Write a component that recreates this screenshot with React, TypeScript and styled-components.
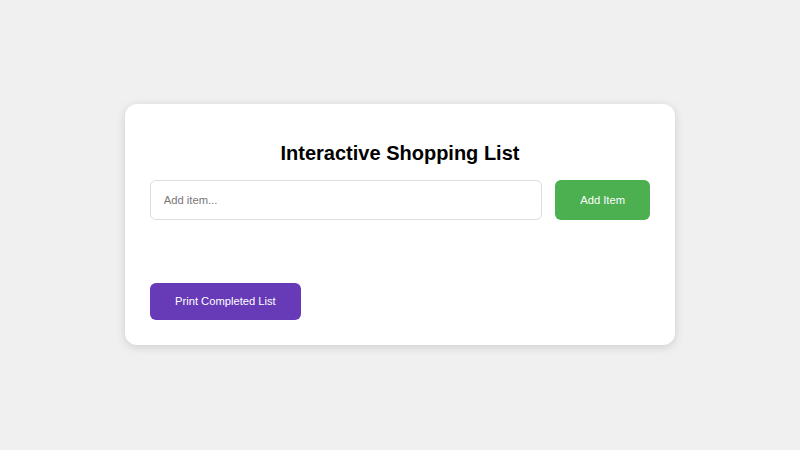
import React, { useState } from "react"
import styled, { createGlobalStyle } from "styled-components"

const GlobalStyle = createGlobalStyle`
  html, body {
    margin: 0;
    padding: 0;
    background-color: #f0f0f0;
    font-family: "Liberation Sans", Arial, sans-serif;
  }
`

const Page = styled.div`
  width: 800px;
  height: 448px;
  display: flex;
  align-items: center;
  justify-content: center;
`

const Card = styled.div`
  box-sizing: border-box;
  width: 550px;
  padding: 25px;
  background-color: #fff;
  border-radius: 12px;
  box-shadow: 0 2px 10px rgba(0, 0, 0, 0.15);
`

const Title = styled.h2`
  margin: 13px 0 15px;
  font-size: 20px;
  line-height: 23px;
  font-weight: 700;
  text-align: center;
  color: #000;
`

const InputRow = styled.div`
  display: flex;
  gap: 13px;
`

const ItemInput = styled.input`
  box-sizing: border-box;
  flex: 1;
  height: 40px;
  padding: 0 12.8px;
  border: 1.6px solid #ddd;
  border-radius: 6px;
  font-family: inherit;
  font-size: 11.2px;
  color: #333;
  outline: none;
  &::placeholder {
    color: #777;
  }
`

const Button = styled.button<{ $color: string; $height: number }>`
  box-sizing: border-box;
  height: ${p => p.$height}px;
  padding: 0 25px;
  border: none;
  border-radius: 6px;
  background-color: ${p => p.$color};
  color: #fff;
  font-family: inherit;
  font-size: 11.2px;
  cursor: pointer;
`

const ItemList = styled.ul`
  list-style: none;
  margin: 16px 0;
  padding: 0;
  min-height: 31px;
`

const Item = styled.li`
  font-size: 11.2px;
  padding: 6px 0;
  color: #333;
`

export default function App() {
  const [text, setText] = useState("")
  const [items, setItems] = useState<string[]>([])

  const addItem = () => {
    if (!text.trim()) return
    setItems([...items, text.trim()])
    setText("")
  }

  return (
    <>
      <GlobalStyle />
      <Page>
        <Card>
          <Title>Interactive Shopping List</Title>
          <InputRow>
            <ItemInput
              placeholder="Add item..."
              value={text}
              onChange={e => setText(e.target.value)}
            />
            <Button $color="#4caf50" $height={40} onClick={addItem}>
              Add Item
            </Button>
          </InputRow>
          <ItemList>
            {items.map((item, i) => (
              <Item key={i}>{item}</Item>
            ))}
          </ItemList>
          <Button $color="#673ab7" $height={37}>
            Print Completed List
          </Button>
        </Card>
      </Page>
    </>
  )
}
